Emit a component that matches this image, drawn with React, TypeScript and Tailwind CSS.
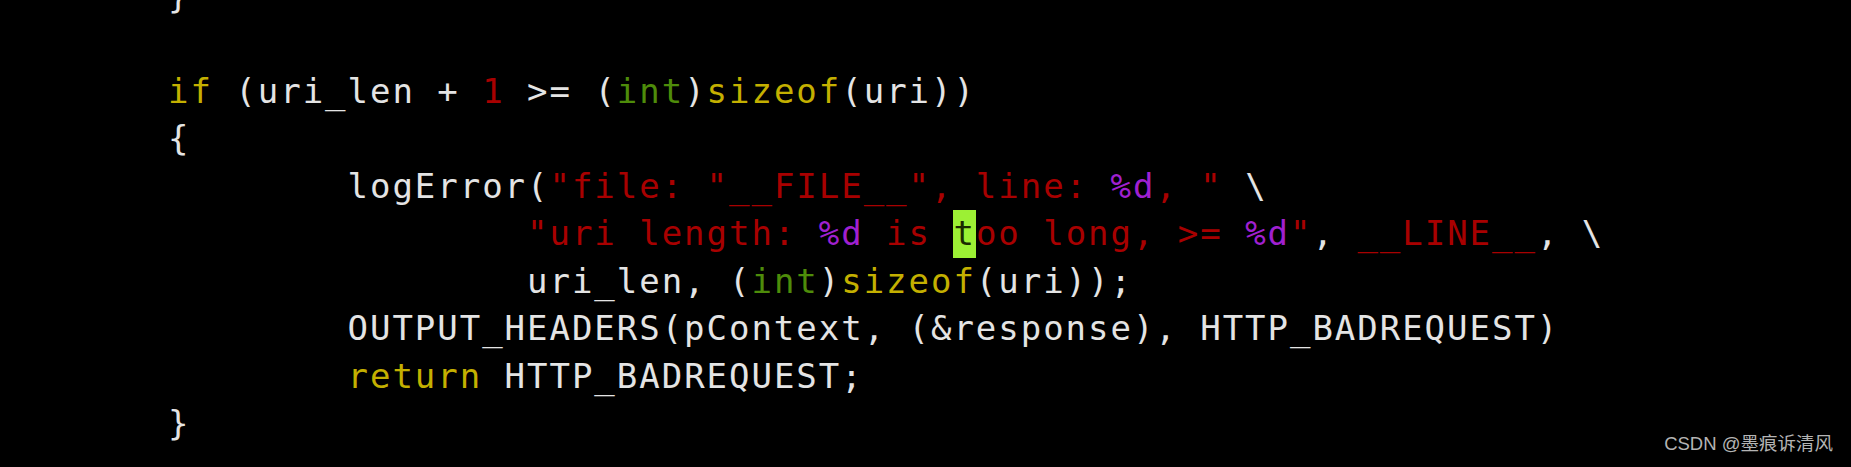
import React from 'react';

type Tok = { t: string; c?: string; hl?: boolean };

const Y = 'text-[#c4b000]';
const G = 'text-[#4e8c0a]';
const R = 'text-[#a80000]';
const P = 'text-[#a020d0]';

const lines: Tok[][] = [
  [{ t: '}' }],
  [],
  [
    { t: 'if', c: Y },
    { t: ' (uri_len + ' },
    { t: '1', c: R },
    { t: ' >= (' },
    { t: 'int', c: G },
    { t: ')' },
    { t: 'sizeof', c: Y },
    { t: '(uri))' },
  ],
  [{ t: '{' }],
  [
    { t: '        logError(' },
    { t: '"file: "__FILE__", line: ', c: R },
    { t: '%d', c: P },
    { t: ', "', c: R },
    { t: ' \\' },
  ],
  [
    { t: '                ' },
    { t: '"uri length: ', c: R },
    { t: '%d', c: P },
    { t: ' is ', c: R },
    { t: 't', hl: true },
    { t: 'oo long, >= ', c: R },
    { t: '%d', c: P },
    { t: '"', c: R },
    { t: ', ' },
    { t: '__LINE__', c: R },
    { t: ', \\' },
  ],
  [
    { t: '                uri_len, (' },
    { t: 'int', c: G },
    { t: ')' },
    { t: 'sizeof', c: Y },
    { t: '(uri));' },
  ],
  [{ t: '        OUTPUT_HEADERS(pContext, (&response), HTTP_BADREQUEST)' }],
  [{ t: '        ' }, { t: 'return', c: Y }, { t: ' HTTP_BADREQUEST;' }],
  [{ t: '}' }],
];

export default function App() {
  return (
    <div className="relative w-[1851px] h-[467px] overflow-hidden bg-black">
      <div
        className="mt-[-27.5px] pl-[168px] whitespace-pre text-[34px] leading-[47.5px] tracking-[1.97px] text-[#e4e4e4]"
        style={{ fontFamily: '"DejaVu Sans Mono", monospace' }}
      >
        {lines.map((line, i) => (
          <div key={i} className="h-[47.5px]">
            {line.map((tok, j) =>
              tok.hl ? (
                <span key={j} className="inline-block h-[47.5px] bg-[#9cf034] text-[#1a2a00]">
                  {tok.t}
                </span>
              ) : (
                <span key={j} className={tok.c}>
                  {tok.t}
                </span>
              )
            )}
          </div>
        ))}
      </div>
      <div
        className="absolute right-[18px] bottom-[9px] text-[18.5px] text-[#b4b4b4]"
        style={{ fontFamily: '"Liberation Sans", "Noto Sans CJK SC", sans-serif' }}
      >
        CSDN @墨痕诉清风
      </div>
    </div>
  );
}
